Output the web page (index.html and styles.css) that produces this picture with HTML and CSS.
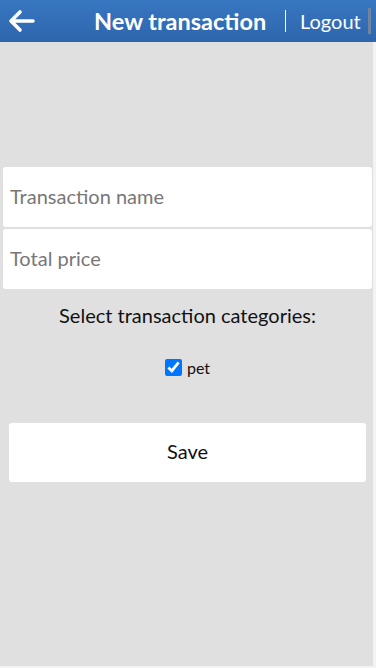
FILE: index.html
```html
<!DOCTYPE html>
<html>
<head>
	<meta charset="utf-8">
	<title>New transaction</title>
	<link rel="stylesheet" href="styles.css">
</head>
<body>
	<div class="header">
		<a href="#" class="back">
			<svg width="28" height="24" viewBox="0 0 28 24">
				<path d="M26 12H4M13 3L4 12L13 21" fill="none" stroke="#fff" stroke-width="3.6" stroke-linecap="round" stroke-linejoin="round"/>
			</svg>
		</a>
		<h1 class="title">New transaction</h1>
		<span class="sep"></span>
		<a href="#" class="logout">Logout</a>
		<span class="bar"></span>
	</div>
	<div class="main">
		<form class="form">
			<input type="text" class="field" placeholder="Transaction name">
			<input type="text" class="field" placeholder="Total price">
			<p class="label">Select transaction categories:</p>
			<div class="cats">
				<label class="cat"><input type="checkbox" checked> pet</label>
			</div>
			<button type="button" class="save">Save</button>
		</form>
	</div>
</body>
</html>
```

FILE: styles.css
```css
*{
	margin: 0px;
	padding: 0px;
	box-sizing: border-box;
}
html, body{
	height: 100%;
}
body{
	font-family: Lato, "Open Sans", sans-serif;
	background-color: #f3f3f3;
	display: flex;
	flex-direction: column;
}
a{
	text-decoration: none;
	color: white;
}
.header{
	height: 42px;
	display: flex;
	align-items: center;
	background: linear-gradient(#3877c2, #2e65ac);
	color: white;
	flex-shrink: 0;
}
.back{
	display: flex;
	margin-left: 7px;
	width: 28px;
}
.title{
	font-size: 23.5px;
	font-weight: bold;
	margin-left: 59px;
	width: 181px;
	text-align: left;
}
.sep{
	width: 1px;
	height: 22px;
	background-color: #fff;
	margin-left: 10px;
}
.logout{
	font-size: 20px;
	margin-left: 14px;
}
.bar{
	width: 3px;
	height: 26px;
	background-color: #6e84a0;
	margin-left: 7px;
}
.main{
	flex: 1;
	background-color: #e0e0e0;
	margin-right: 3px;
	margin-bottom: 2px;
}
.form{
	padding: 125px 1px 0 3px;
	display: flex;
	flex-direction: column;
}
.field{
	height: 60px;
	border: none;
	border-radius: 3px;
	background-color: #fff;
	font-family: Lato, "Open Sans", sans-serif;
	font-size: 20px;
	padding: 0 0 3px 7px;
	margin-bottom: 2px;
	outline: none;
}
.field::placeholder{
	color: #777;
}
.label{
	text-align: center;
	font-size: 20px;
	color: #111;
	margin-top: 12px;
}
.cats{
	display: flex;
	justify-content: center;
	margin-top: 31px;
}
.cat{
	display: flex;
	align-items: center;
	font-size: 16px;
	color: #111;
	margin-left: 0px;
}
.cat input{
	width: 17px;
	height: 17px;
	margin-right: 5px;
}
.save{
	margin: 46px 6px 0 6px;
	height: 59px;
	padding-bottom: 3px;
	border: none;
	border-radius: 3px;
	background-color: #fff;
	font-family: Lato, "Open Sans", sans-serif;
	font-size: 20px;
	color: #111;
}
```
